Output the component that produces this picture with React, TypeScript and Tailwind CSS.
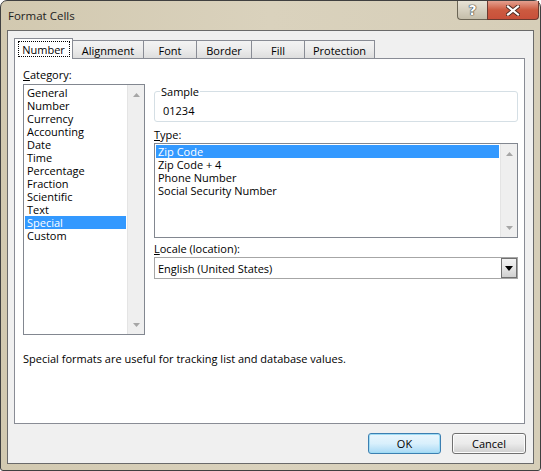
import React from "react";

const Up = () => (
  <svg width="7" height="4" viewBox="0 0 7 4">
    <path d="M0 4 L3.5 0 L7 4Z" fill="#a6a6a6" />
  </svg>
);
const Down = () => (
  <svg width="7" height="4" viewBox="0 0 7 4">
    <path d="M0 0 L7 0 L3.5 4Z" fill="#a6a6a6" />
  </svg>
);

function ListBox({
  items,
  selected,
  className,
}: {
  items: string[];
  selected: string;
  className: string;
}) {
  return (
    <div className={`flex border border-[#828790] bg-white ${className}`}>
      <div className="flex-1 p-[1px]">
        {items.map((it) => (
          <div
            key={it}
            className={`h-[13px] leading-[13px] pl-[2px] whitespace-nowrap ${
              it === selected ? "bg-[#3399ff] text-white" : "text-black"
            }`}
          >
            {it}
          </div>
        ))}
      </div>
      <div className="w-[17px] flex flex-col justify-between bg-[#efefef] border-l border-[#e4e4e4]">
        <div className="h-[17px] flex items-center justify-center pt-[2px]">
          <Up />
        </div>
        <div className="h-[17px] flex items-center justify-center pb-[2px]">
          <Down />
        </div>
      </div>
    </div>
  );
}

function Tab({ label, w }: { label: string; w: string }) {
  return (
    <div
      className={`${w} h-[19px] -ml-[1px] flex items-center justify-center border border-b-0 border-[#898c95] bg-linear-to-b from-[#f3f3f3] via-[#ebebeb] to-[#dcdcdc] leading-[15px]`}
    >
      {label}
    </div>
  );
}

export default function App() {
  return (
    <div className="w-[541px] h-[471px] bg-white font-['Open_Sans',sans-serif] text-[11px] text-black">
      <div className="w-full h-full flex flex-col rounded-t-[7px] rounded-b-[3px] border border-[#404040] bg-linear-to-r from-[#d2c9b0] via-[#dad2bd] to-[#d6ceb8] px-[6px] pb-[6px]">
        {/* title bar */}
        <div className="h-[29px] flex items-start justify-between">
          <div className="pt-[7px] pl-[1px] leading-[15px] text-[11.5px] text-[#1e1e1e]">Format Cells</div>
          <div className="flex -mr-[5px]">
            <div className="w-[30px] h-[19px] flex items-center justify-center rounded-bl-[4px] border border-t-0 border-r-0 border-[#6b6555] bg-linear-to-b from-[#e8e3d6] via-[#d6d0c0] to-[#c4bda9]">
              <span className="text-[14px] font-bold leading-[14px] text-white [text-shadow:0_0_1px_#333,0_0_1px_#333,0_0_1px_#333] font-['DejaVu_Sans',sans-serif]">?</span>
            </div>
            <div className="w-[52px] h-[19px] flex items-center justify-center rounded-br-[4px] border border-t-0 border-[#6b3a30] bg-linear-to-b from-[#e4a08f] via-[#cc5a40] to-[#c8503a]">
              <svg width="14" height="11" viewBox="0 0 14 11">
                <path d="M2 1.5 L12 9.5 M12 1.5 L2 9.5" stroke="#4a2a22" strokeWidth="4" strokeLinecap="square" />
                <path d="M2 1.5 L12 9.5 M12 1.5 L2 9.5" stroke="#ffffff" strokeWidth="2.2" strokeLinecap="square" />
              </svg>
            </div>
          </div>
        </div>
        {/* client area */}
        <div className="flex-1 border border-[#6a6a6a] bg-[#f0f0f0] flex flex-col">
          {/* tabs */}
          <div className="ml-[6px] mt-[7px] h-[21px] flex items-end">
            <div className="relative z-10 w-[59px] h-[21px] bg-white border border-b-0 border-[#898c95] flex items-start justify-center pt-[2px]">
              <div className="w-[52px] h-[16px] outline outline-1 outline-dotted outline-black -outline-offset-1 flex items-center justify-center leading-[15px]">
                Number
              </div>
            </div>
            <Tab label="Alignment" w="w-[72px]" />
            <Tab label="Font" w="w-[54px]" />
            <Tab label="Border" w="w-[56px]" />
            <Tab label="Fill" w="w-[54px]" />
            <Tab label="Protection" w="w-[71px]" />
          </div>
          {/* panel */}
          <div className="ml-[6px] -mt-[1px] w-[511px] h-[366px] border border-[#898c95] bg-white flex flex-col">
            <div className="flex pl-[8px]">
              <div className="w-[122px] flex flex-col">
                <div className="mt-[8px] h-[15px] leading-[15px]">
                  <span className="underline">C</span>ategory:
                </div>
                <ListBox
                  className="mt-[2px] h-[251px]"
                  selected="Special"
                  items={[
                    "General",
                    "Number",
                    "Currency",
                    "Accounting",
                    "Date",
                    "Time",
                    "Percentage",
                    "Fraction",
                    "Scientific",
                    "Text",
                    "Special",
                    "Custom",
                  ]}
                />
              </div>
              <div className="ml-[9px] w-[364px] flex flex-col">
                <div className="relative mt-[32px] h-[31px] border border-[#d5dfe5] rounded-[3px]">
                  <div className="absolute left-[5px] -top-[8px] px-[1px] bg-white leading-[15px]">Sample</div>
                  <div className="pl-[8px] pt-[11px] leading-[15px]">01234</div>
                </div>
                <div className="mt-[5px] h-[15px] leading-[15px]">
                  <span className="underline">T</span>ype:
                </div>
                <ListBox
                  className="mt-[1px] h-[95px]"
                  selected="Zip Code"
                  items={["Zip Code", "Zip Code + 4", "Phone Number", "Social Security Number"]}
                />
                <div className="mt-[3px] h-[15px] leading-[15px]">
                  <span className="underline">L</span>ocale (location):
                </div>
                <div className="mt-[1px] h-[22px] border border-[#a6a6a6] bg-white flex items-center">
                  <div className="flex-1 pl-[3px] leading-[15px]">English (United States)</div>
                  <div className="w-[16px] h-[20px] border border-[#707070] bg-linear-to-b from-[#f2f2f2] via-[#e6e6e6] to-[#cfcfcf] flex items-center justify-center">
                    <svg width="8" height="5" viewBox="0 0 8 5">
                      <path d="M0 0 L8 0 L4 5Z" fill="#000" />
                    </svg>
                  </div>
                </div>
              </div>
            </div>
            <div className="pl-[8px] mt-[16px] leading-[15px]">
              Special formats are useful for tracking list and database values.
            </div>
          </div>
          {/* buttons */}
          <div className="mt-[9px] mr-[7px] flex justify-end gap-[11px]">
            <div className="w-[73px] h-[21px] rounded-[3px] border border-[#3c7fb1] bg-linear-to-b from-[#eaf6fd] via-[#d9f0fc] to-[#a7d9f5] flex items-center justify-center leading-[15px] shadow-[inset_0_0_0_1px_#9fdcf5]">
              OK
            </div>
            <div className="w-[74px] h-[21px] rounded-[3px] border border-[#707070] bg-linear-to-b from-[#f2f2f2] via-[#ebebeb] to-[#cfcfcf] flex items-center justify-center leading-[15px] shadow-[inset_0_0_0_1px_#fcfcfc]">
              Cancel
            </div>
          </div>
        </div>
      </div>
    </div>
  );
}
